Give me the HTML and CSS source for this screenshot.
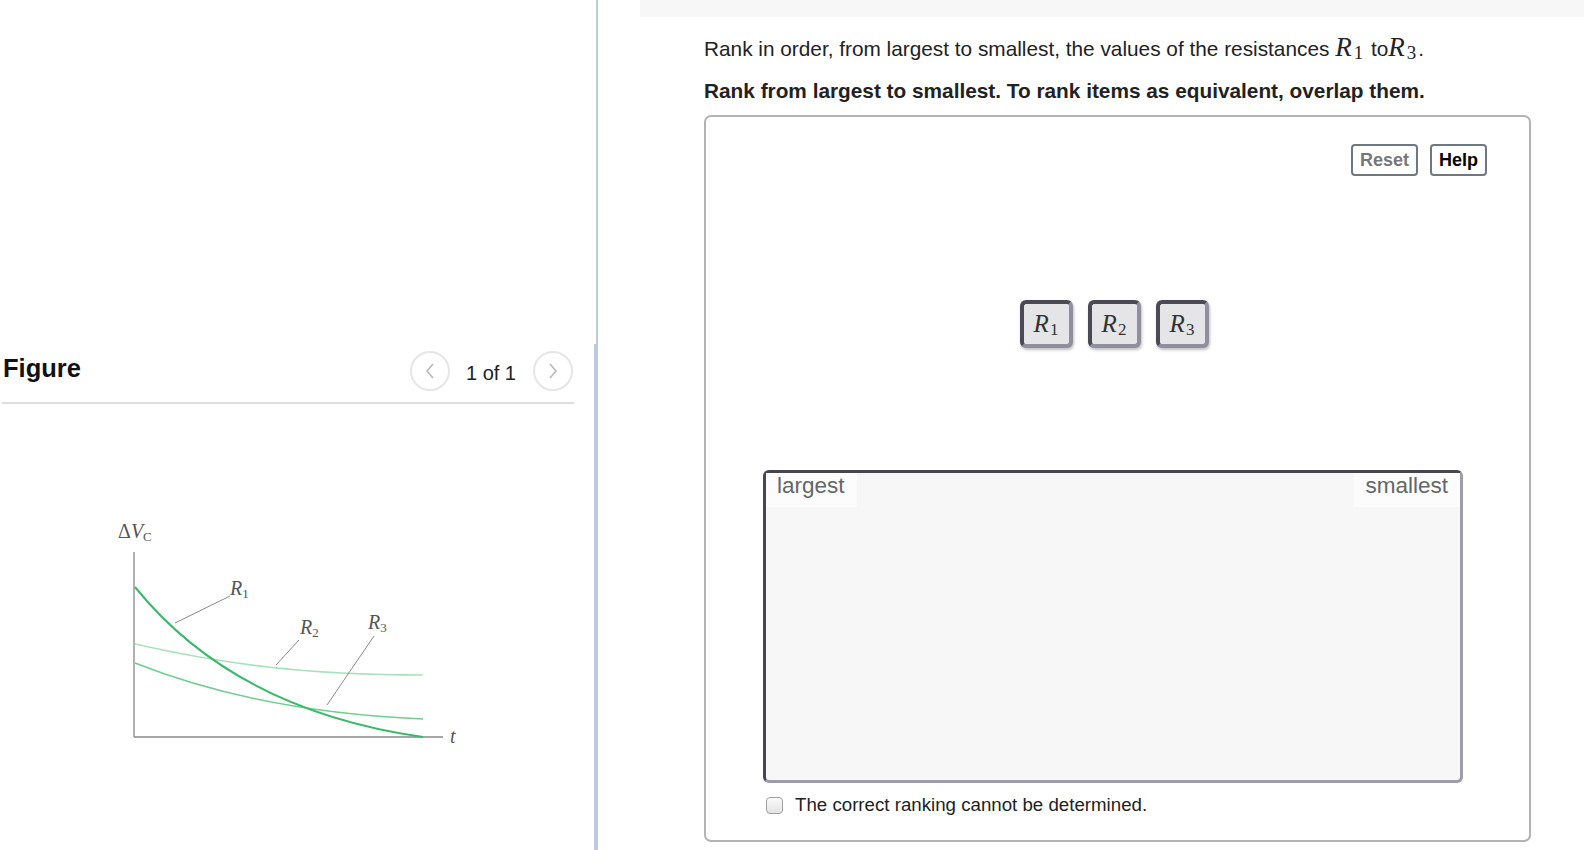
FILE: index.html
```html
<!DOCTYPE html>
<html lang="en">
<head>
    <meta charset="UTF-8">
    <meta name="viewport" content="width=device-width, initial-scale=1.0">
    <title>Ranking Task</title>
    <link rel="stylesheet" href="styles.css">
</head>
<body>
    <div class="page">
        <div class="left-col">
            <div class="top-blank"></div>
            <div class="figure-panel">
                <div class="figure-header">
                    <h2 class="figure-title">Figure</h2>
                    <div class="figure-nav">
                        <button class="nav-btn" aria-label="Previous">
                            <svg width="12" height="18" viewBox="0 0 12 18"><path d="M9 2 L3 9 L9 16" fill="none" stroke="#b8b8b8" stroke-width="1.6"/></svg>
                        </button>
                        <span class="nav-count">1 of 1</span>
                        <button class="nav-btn" aria-label="Next">
                            <svg width="12" height="18" viewBox="0 0 12 18"><path d="M3 2 L9 9 L3 16" fill="none" stroke="#b8b8b8" stroke-width="1.6"/></svg>
                        </button>
                    </div>
                </div>
                <svg class="graph" width="370" height="240" viewBox="0 0 370 240">
                    <!-- axes -->
                    <line x1="33" y1="38" x2="33" y2="223" stroke="#888" stroke-width="1.3"/>
                    <line x1="33" y1="223" x2="342" y2="223" stroke="#888" stroke-width="1.3"/>
                    <text x="349" y="229" class="g-lbl">t</text>
                    <text x="17" y="24" class="g-up">&#916;<tspan class="g-lbl">V</tspan><tspan class="g-sub" dy="3">C</tspan></text>
                    <!-- curves -->
                    <path d="M34 130 C 122 150, 204 161, 322 161" fill="none" stroke="#a8e2bd" stroke-width="1.6"/>
                    <path d="M34 149 C 112 180, 204 200, 322 205" fill="none" stroke="#6dcf90" stroke-width="1.6"/>
                    <path d="M34 73 C 80 130, 162 200, 322 223" fill="none" stroke="#3db86b" stroke-width="2"/>
                    <!-- leaders -->
                    <line x1="74" y1="109" x2="129" y2="82" stroke="#8a8a8a" stroke-width="1"/>
                    <line x1="175" y1="151" x2="198" y2="126" stroke="#8a8a8a" stroke-width="1"/>
                    <line x1="226" y1="191" x2="273" y2="122" stroke="#8a8a8a" stroke-width="1"/>
                    <text x="129" y="81" class="g-lbl">R<tspan class="g-sub" dy="3">1</tspan></text>
                    <text x="199" y="120" class="g-lbl">R<tspan class="g-sub" dy="3">2</tspan></text>
                    <text x="267" y="115" class="g-lbl">R<tspan class="g-sub" dy="3">3</tspan></text>
                </svg>
            </div>
        </div>

        <div class="right-col">
            <div class="top-bar"></div>
            <div class="content">
                <p class="prompt">Rank in order, from largest to smallest, the values of the resistances <span class="math">R<sub>1</sub></span> to<span class="math">R<sub>3</sub></span>.</p>
                <p class="instructions">Rank from largest to smallest. To rank items as equivalent, overlap them.</p>

                <div class="rank-box">
                    <div class="tool-row">
                        <button class="tool-btn reset">Reset</button>
                        <button class="tool-btn help">Help</button>
                    </div>

                    <div class="tiles">
                        <div class="tile"><span class="math">R<sub>1</sub></span></div>
                        <div class="tile"><span class="math">R<sub>2</sub></span></div>
                        <div class="tile"><span class="math">R<sub>3</sub></span></div>
                    </div>

                    <div class="drop-zone">
                        <span class="zone-label">largest</span>
                        <span class="zone-label">smallest</span>
                    </div>

                    <label class="cannot">
                        <input type="checkbox" class="check">
                        <span>The correct ranking cannot be determined.</span>
                    </label>
                </div>
            </div>
        </div>
    </div>
</body>
</html>
```

FILE: styles.css
```css
body {
    margin: 0;
    font-family: "Liberation Sans", Arial, sans-serif;
    color: #222;
    background-color: #fff;
}

.page {
    display: flex;
    height: 850px;
    overflow: hidden;
}

/* left column with figure */
.left-col {
    width: 598px;
    display: flex;
    flex-direction: column;
}

.top-blank {
    height: 344px;
    border-right: 2px solid #bccadb;
}

.figure-panel {
    flex: 1;
    border-right: 4px solid #bccadb;
    padding-top: 6px;
}

.figure-header {
    display: flex;
    justify-content: space-between;
    align-items: center;
    margin: 0 20px 0 2px;
    height: 42px;
    padding-bottom: 10px;
    border-bottom: 2px solid #dedede;
}

.figure-title {
    margin: 0 0 5px 1px;
    font-size: 25.5px;
    font-weight: bold;
    color: #111;
}

.figure-nav {
    display: flex;
    align-items: center;
    margin-right: 1px;
}

.nav-btn {
    width: 40px;
    height: 40px;
    border: 2px solid #e6e6e6;
    border-radius: 50%;
    background: #fff;
    display: flex;
    align-items: center;
    justify-content: center;
    padding: 0;
}

.nav-count {
    font-size: 20px;
    margin: 5px 17px 0 16px;
    color: #222;
}

.graph {
    display: block;
    margin: 110px 0 0 101px;
}

.g-lbl {
    font-family: "Liberation Serif", serif;
    font-style: italic;
    font-size: 20px;
    fill: #555;
}

.g-up {
    font-family: "Liberation Serif", serif;
    font-size: 20px;
    fill: #555;
}

.g-sub {
    font-family: "Liberation Serif", serif;
    font-style: normal;
    font-size: 13px;
    fill: #555;
}

/* right column */
.right-col {
    flex: 1;
    padding-left: 42px;
}

.top-bar {
    height: 17px;
    background-color: #f7f7f7;
}

.content {
    padding-left: 64px;
}

.prompt {
    margin: 19px 0 0 0;
    font-size: 20.8px;
    line-height: 26px;
    color: #222;
}

.instructions {
    margin: 16px 0 0 0;
    font-size: 20.8px;
    line-height: 26px;
    font-weight: bold;
    color: #222;
}

.math {
    font-family: "Liberation Serif", "DejaVu Serif", serif;
    font-style: italic;
    font-size: 27px;
    line-height: 20px;
}

.math sub {
    font-style: normal;
    font-size: 19px;
    vertical-align: -3px;
    line-height: 0;
    padding: 0 2px 0 2px;
}

.rank-box {
    width: 823px;
    height: 723px;
    margin-top: 11px;
    border: 2px solid #b3b3b3;
    border-radius: 7px;
    display: flex;
    flex-direction: column;
}

.tool-row {
    display: flex;
    justify-content: flex-end;
    gap: 12px;
    padding: 27px 42px 0 0;
}

.tool-btn {
    font-family: "Liberation Sans", Arial, sans-serif;
    font-size: 18px;
    font-weight: bold;
    height: 32px;
    padding: 0 7px;
    background: #fff;
    border: 2px solid #6f7880;
    border-radius: 4px;
}

.reset {
    color: #777;
}

.help {
    color: #000;
}

.tiles {
    display: flex;
    justify-content: center;
    gap: 15px;
    margin: 124px 0 0 0;
    padding-right: 7px;
}

.tile {
    width: 45px;
    height: 40px;
    background-color: #e5e5e7;
    border: 4px solid #8f8fa0;
    border-top-color: #4a4a55;
    border-left-color: #4a4a55;
    border-radius: 6px;
    box-shadow: 1px 2px 3px rgba(0, 0, 0, 0.25);
    display: flex;
    align-items: center;
    justify-content: center;
    color: #333;
}

.tile .math {
    font-size: 25px;
    line-height: 30px;
}

.tile .math sub {
    font-size: 17px;
    padding: 0 0 0 1px;
}

.drop-zone {
    width: 694px;
    height: 307px;
    margin: 122px 0 0 57px;
    background-color: #f7f7f7;
    border: 3px solid #9c9cac;
    border-top-color: #46464f;
    border-left-color: #46464f;
    border-radius: 6px;
    display: flex;
    justify-content: space-between;
    align-items: flex-start;
}

.zone-label {
    background-color: #fcfcfc;
    color: #666;
    font-size: 22.5px;
    line-height: 26px;
    padding: 0 12px 8px 11px;
}

.cannot {
    display: flex;
    align-items: center;
    margin: 11px 0 0 60px;
    font-size: 18.7px;
    color: #222;
}

.check {
    appearance: none;
    width: 17px;
    height: 17px;
    margin: 0 12px 0 0;
    border: 1px solid #a0a0a0;
    border-radius: 4px;
    background: linear-gradient(#fafafa, #e4e4e4);
}
```
